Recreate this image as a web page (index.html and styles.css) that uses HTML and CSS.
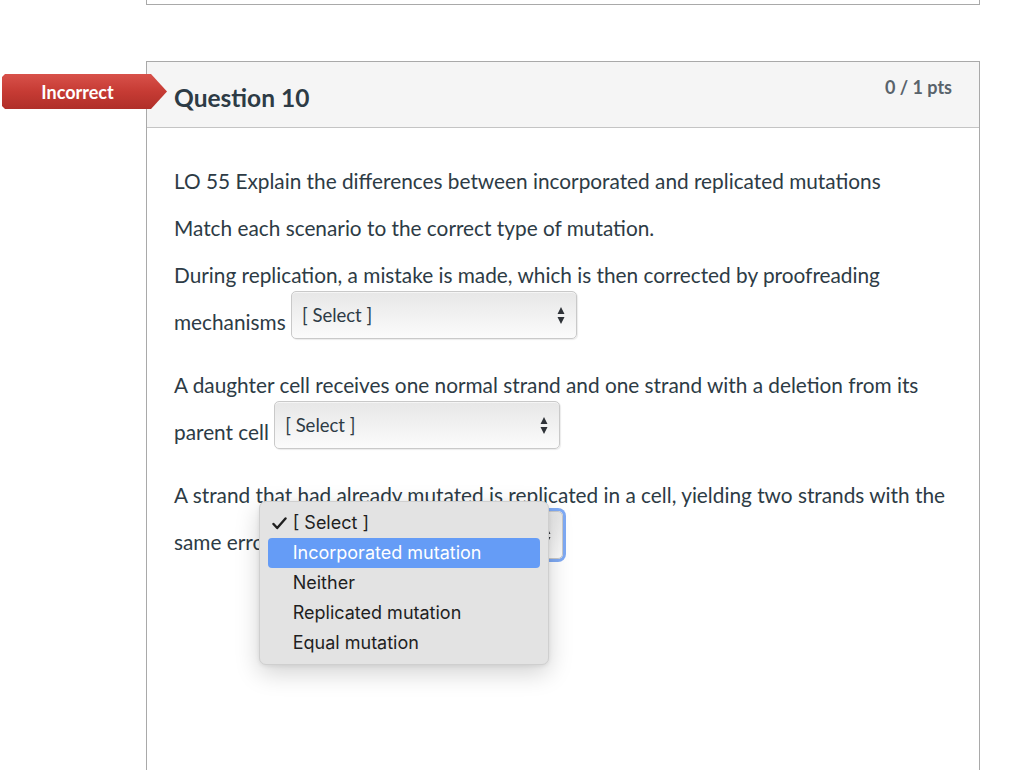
FILE: index.html
```html
<!DOCTYPE html>
<html lang="en">
<head>
<meta charset="utf-8">
<title>Question 10</title>
<link rel="stylesheet" href="styles.css">
</head>
<body>
<div class="page">
  <div class="prev-box"></div>

  <div class="question">
    <div class="badge">Incorrect</div>
    <div class="q-header">
      <h2 class="q-title">Question 10</h2>
      <div class="q-pts">0 / 1 pts</div>
    </div>
    <div class="q-body">
      <p class="intro">LO 55 Explain the differences between incorporated and replicated mutations</p>
      <p class="intro">Match each scenario to the correct type of mutation.</p>
      <p class="scenario">During replication, a mistake is made, which is then corrected by proofreading mechanisms <span class="select"><span class="select-text">[ Select ]</span><svg class="arrows" width="8" height="17" viewBox="0 0 8 17"><path d="M4 0 L7.5 7 L0.5 7 Z M0.5 10 L7.5 10 L4 17 Z" fill="#2f3338"/></svg></span></p>
      <p class="scenario">A daughter cell receives one normal strand and one strand with a deletion from its parent cell <span class="select"><span class="select-text">[ Select ]</span><svg class="arrows" width="8" height="17" viewBox="0 0 8 17"><path d="M4 0 L7.5 7 L0.5 7 Z M0.5 10 L7.5 10 L4 17 Z" fill="#2f3338"/></svg></span></p>
      <p class="scenario">A strand that had already mutated is replicated in a cell, yielding two strands with the same error <span class="select focused"><span class="select-text">[ Select ]</span><svg class="arrows" width="8" height="17" viewBox="0 0 8 17"><path d="M4 0 L7.5 7 L0.5 7 Z M0.5 10 L7.5 10 L4 17 Z" fill="#2f3338"/></svg><span class="menu">
          <span class="menu-item"><svg class="check" width="15" height="13" viewBox="0 0 15 13"><path d="M1.5 7 L5.2 11 L13.5 1.5" fill="none" stroke="#1f1f1f" stroke-width="2.4" stroke-linecap="round" stroke-linejoin="round"/></svg>[ Select ]</span>
          <span class="menu-item active">Incorporated mutation</span>
          <span class="menu-item">Neither</span>
          <span class="menu-item">Replicated mutation</span>
          <span class="menu-item">Equal mutation</span>
        </span></span></p>
    </div>
  </div>
</div>
</body>
</html>
```

FILE: styles.css
```css
* {
  box-sizing: border-box;
}

html, body {
  margin: 0;
  padding: 0;
  background: #ffffff;
  height: 100%;
  overflow: hidden;
}

body {
  font-family: Lato, "Liberation Sans", sans-serif;
  color: #2d3b45;
}

.page {
  margin-left: 146px;
  width: 834px;
}

.prev-box {
  height: 5px;
  border: 1px solid #a9a9a9;
  border-top: none;
}

.question {
  position: relative;
  margin-top: 56px;
  border: 1px solid #a9a9a9;
  border-bottom: none;
  height: 720px;
}

.badge {
  position: absolute;
  left: -145px;
  top: 12px;
  width: 165px;
  height: 35px;
  padding-right: 14px;
  display: flex;
  align-items: center;
  justify-content: center;
  color: #ffffff;
  font-weight: 700;
  font-size: 18px;
  background: linear-gradient(to bottom, #d8514a 0%, #c63b34 50%, #b02f29 100%);
  clip-path: polygon(3px 0, 149px 0, 165px 17.5px, 149px 35px, 3px 35px, 0 32px, 0 3px);
}

.q-header {
  height: 66px;
  background: #f5f5f5;
  border-bottom: 1px solid #c4c4c4;
  display: flex;
  justify-content: space-between;
  align-items: flex-start;
  padding: 0 27px 0 27px;
}

.q-title {
  margin: 22px 0 0 0;
  font-size: 24.5px;
  line-height: 28px;
  font-weight: 700;
  color: #2d3b45;
}

.q-pts {
  margin-top: 14px;
  font-size: 18px;
  line-height: 22px;
  font-weight: 700;
  color: #59636b;
}

.q-body {
  padding: 37px 24px 0 27px;
}

.q-body p {
  margin: 0;
  font-size: 20.8px;
  line-height: 32px;
}

.q-body p.intro {
  margin-bottom: 15px;
}

.q-body p.scenario {
  margin-bottom: 10px;
}

.select {
  position: relative;
  display: inline-flex;
  align-items: center;
  justify-content: space-between;
  width: 286px;
  height: 48px;
  vertical-align: middle;
  margin-bottom: 20px;
  padding: 0 10px 0 10px;
  border: 1px solid #c9c9c9;
  border-radius: 5px;
  background: linear-gradient(to bottom, #e7e7e7 0%, #f1f1f1 50%, #fbfbfb 100%);
  box-shadow: 1px 1px 1px rgba(0, 0, 0, 0.08), inset 0 1px 0 rgba(255, 255, 255, 0.6);
  font-size: 18.5px;
  line-height: 22px;
  color: #2d3b45;
}

.select-text {
  margin-top: -1px;
}

.arrows {
  display: block;
  margin-right: 1px;
}

.select.focused {
  box-shadow: 0 0 0 3px #7faaf4;
}

.menu {
  position: absolute;
  left: -19px;
  top: -11px;
  width: 290px;
  padding: 6px 8px;
  display: flex;
  flex-direction: column;
  background: #e3e3e3;
  border: 1px solid #cfcfcf;
  border-radius: 7px;
  box-shadow: 0 8px 24px rgba(0, 0, 0, 0.18), 0 1px 4px rgba(0, 0, 0, 0.08);
  font-family: Inter, "Noto Sans", sans-serif;
  font-size: 18px;
  color: #1f1f1f;
  z-index: 5;
}

.menu-item {
  display: flex;
  align-items: center;
  height: 30px;
  padding-left: 25px;
  border-radius: 4px;
  position: relative;
}

.menu-item.active {
  background: #659cf6;
  color: #ffffff;
}

.check {
  position: absolute;
  left: 4px;
  top: 9px;
}
```
